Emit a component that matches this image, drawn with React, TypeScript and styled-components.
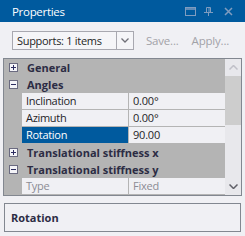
import React from "react";
import styled, { createGlobalStyle } from "styled-components";

const Global = createGlobalStyle`
  html, body { margin: 0; padding: 0; background: #f0f0f4; }
  body { font-family: "Segoe UI", "Open Sans", "Noto Sans", sans-serif; }
`;

const Panel = styled.div`
  width: 245px;
  height: 236px;
  display: flex;
  flex-direction: column;
  background: #f0f0f4;
  box-sizing: border-box;
  overflow: hidden;
`;

const TitleBar = styled.div`
  height: 22px;
  background: #005a9e;
  display: flex;
  align-items: center;
  padding: 0 0 0 12px;
  color: #ffffff;
  font-size: 11.5px;
  letter-spacing: -0.3px;
`;

const TitleText = styled.div`
  flex: 1;
`;

const TitleIcons = styled.div`
  display: flex;
  align-items: center;
  padding-right: 12px;
`;

const Toolbar = styled.div`
  height: 36px;
  display: flex;
  align-items: center;
  padding: 0 0 0 12px;
  box-sizing: border-box;
`;

const Combo = styled.div`
  width: 122px;
  height: 19px;
  border: 1px solid #a8a8b0;
  background: #f5f5f8;
  display: flex;
  box-sizing: border-box;
  font-size: 11px;
  letter-spacing: -0.3px;
  color: #1e1e1e;
`;

const ComboText = styled.div`
  flex: 1;
  padding-left: 4px;
  line-height: 17px;
  white-space: nowrap;
  overflow: hidden;
`;

const ComboButton = styled.div`
  width: 16px;
  border-left: 1px solid #a8a8b0;
  display: flex;
  align-items: center;
  justify-content: center;
`;

const ToolButton = styled.div<{ $ml: number }>`
  margin-left: ${(p) => p.$ml}px;
  font-size: 11.5px;
  letter-spacing: -0.2px;
  color: #a2a2a8;
`;

const Grid = styled.div`
  margin: 0 3px 0 3px;
  height: 138px;
  border: 1px solid #828790;
  box-sizing: border-box;
  display: flex;
  background: #b4b4b4;
`;

const Rows = styled.div`
  flex: 1;
  display: flex;
  flex-direction: column;
`;

const Row = styled.div`
  height: 17px;
  display: flex;
  font-size: 11px;
`;

const Gutter = styled.div`
  width: 18px;
  display: flex;
  align-items: center;
  justify-content: center;
  flex-shrink: 0;
`;

const CategoryLabel = styled.div`
  font-weight: 700;
  font-size: 11px;
  color: #2c2c44;
  line-height: 17px;
  padding-left: 5px;
  white-space: nowrap;
`;

const NameCell = styled.div<{ $selected?: boolean; $dim?: boolean }>`
  width: 107px;
  box-sizing: border-box;
  padding-left: 4px;
  line-height: 16px;
  letter-spacing: -0.3px;
  border-bottom: 1px solid #b4b4b4;
  border-right: 1px solid #b4b4b4;
  background: ${(p) => (p.$selected ? "#005a9e" : "#f0f0f4")};
  color: ${(p) => (p.$selected ? "#ffffff" : p.$dim ? "#8c8c94" : "#1e1e28")};
  white-space: nowrap;
`;

const ValueCell = styled.div<{ $dim?: boolean }>`
  flex: 1;
  box-sizing: border-box;
  padding-left: 4px;
  line-height: 16px;
  letter-spacing: -0.2px;
  border-bottom: 1px solid #b4b4b4;
  background: #f0f0f4;
  color: ${(p) => (p.$dim ? "#8c8c94" : "#1e1e28")};
  white-space: nowrap;
`;

const Expander = styled.div`
  width: 9px;
  height: 9px;
  box-sizing: border-box;
  border: 1px solid #6a6a80;
  background: #f4f4f8;
  display: flex;
  align-items: center;
  justify-content: center;
  margin-left: 1px;
`;

const ScrollBar = styled.div`
  width: 16px;
  background: #e8e8ec;
  display: flex;
  flex-direction: column;
`;

const ScrollArrow = styled.div`
  height: 17px;
  display: flex;
  align-items: center;
  justify-content: center;
`;

const ScrollTrack = styled.div`
  flex: 1;
  display: flex;
  flex-direction: column;
`;

const Thumb = styled.div`
  height: 49px;
  background: #cdcdcd;
`;

const Description = styled.div`
  margin: 7px 4px 0 4px;
  height: 29px;
  border: 1px solid #828790;
  box-sizing: border-box;
  padding-left: 6px;
  display: flex;
  align-items: center;
  font-size: 11px;
  font-weight: 700;
  color: #2c2c44;
`;

const Plus = () => (
  <svg width="7" height="7" viewBox="0 0 7 7">
    <path d="M1 3.5h5M3.5 1v5" stroke="#2c2c60" strokeWidth="1" />
  </svg>
);
const Minus = () => (
  <svg width="7" height="7" viewBox="0 0 7 7">
    <path d="M1 3.5h5" stroke="#2c2c60" strokeWidth="1" />
  </svg>
);

type Item =
  | { kind: "cat"; label: string; open: boolean }
  | { kind: "prop"; name: string; value: string; selected?: boolean; dim?: boolean };

const items: Item[] = [
  { kind: "cat", label: "General", open: false },
  { kind: "cat", label: "Angles", open: true },
  { kind: "prop", name: "Inclination", value: "0.00°" },
  { kind: "prop", name: "Azimuth", value: "0.00°" },
  { kind: "prop", name: "Rotation", value: "90.00", selected: true },
  { kind: "cat", label: "Translational stiffness x", open: false },
  { kind: "cat", label: "Translational stiffness y", open: true },
  { kind: "prop", name: "Type", value: "Fixed", dim: true },
];

export default function App() {
  return (
    <>
      <Global />
      <Panel>
        <TitleBar>
          <TitleText>Properties</TitleText>
          <TitleIcons>
            <svg width="11" height="9" viewBox="0 0 11 9">
              <rect x="0.5" y="0.5" width="10" height="8" fill="none" stroke="#7f9cbf" />
              <path d="M0.5 2h10" stroke="#7f9cbf" strokeWidth="1.5" />
            </svg>
            <svg width="9" height="9" viewBox="0 0 9 9" style={{ marginLeft: 8 }}>
              <path d="M2.5 0.5h4v5h-4z" fill="none" stroke="#7f9cbf" />
              <path d="M0 5.5h9M4.5 5.5v3.5M5 1v4" stroke="#7f9cbf" />
            </svg>
            <svg width="9" height="9" viewBox="0 0 9 9" style={{ marginLeft: 11 }}>
              <path d="M1 1l7 7M8 1l-7 7" stroke="#7f9cbf" strokeWidth="1.5" />
            </svg>
          </TitleIcons>
        </TitleBar>
        <Toolbar>
          <Combo>
            <ComboText>Supports: 1 items</ComboText>
            <ComboButton>
              <svg width="8" height="5" viewBox="0 0 8 5">
                <path d="M0.5 0.5l3.5 3.5 3.5-3.5" fill="none" stroke="#707078" strokeWidth="1.3" />
              </svg>
            </ComboButton>
          </Combo>
          <ToolButton $ml={12}>Save...</ToolButton>
          <ToolButton $ml={13}>Apply...</ToolButton>
        </Toolbar>
        <Grid>
          <Rows>
            {items.map((it, i) =>
              it.kind === "cat" ? (
                <Row key={i}>
                  <Gutter>
                    <Expander>{it.open ? <Minus /> : <Plus />}</Expander>
                  </Gutter>
                  <CategoryLabel>{it.label}</CategoryLabel>
                </Row>
              ) : (
                <Row key={i}>
                  <Gutter />
                  <NameCell $selected={it.selected} $dim={it.dim}>
                    {it.name}
                  </NameCell>
                  <ValueCell $dim={it.dim}>{it.value}</ValueCell>
                </Row>
              )
            )}
          </Rows>
          <ScrollBar>
            <ScrollArrow>
              <svg width="9" height="5" viewBox="0 0 9 5">
                <path d="M0.5 4.5l4-4 4 4" fill="none" stroke="#c0c0c8" strokeWidth="1.5" />
              </svg>
            </ScrollArrow>
            <ScrollTrack>
              <Thumb />
            </ScrollTrack>
            <ScrollArrow>
              <svg width="9" height="5" viewBox="0 0 9 5">
                <path d="M0.5 0.5l4 4 4-4" fill="none" stroke="#606068" strokeWidth="1.5" />
              </svg>
            </ScrollArrow>
          </ScrollBar>
        </Grid>
        <Description>Rotation</Description>
      </Panel>
    </>
  );
}
